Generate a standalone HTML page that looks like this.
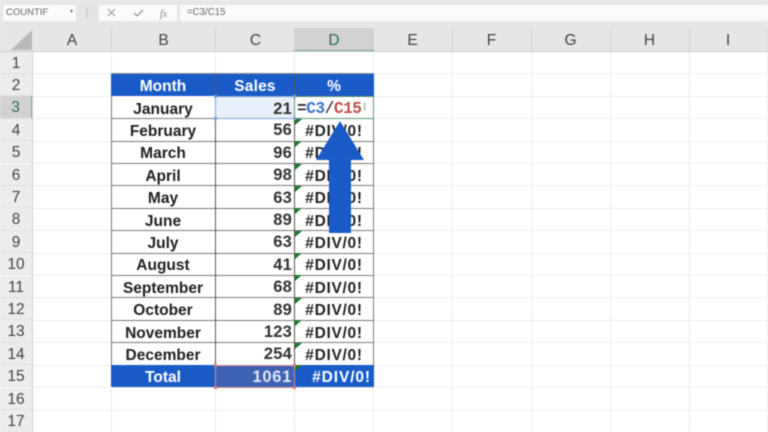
<!DOCTYPE html>
<html><head><meta charset="utf-8"><style>
html,body{margin:0;padding:0;background:#fff}
#p{position:relative;width:768px;height:432px;overflow:hidden;background:#fff;font-family:"Liberation Sans",sans-serif;filter:blur(.45px)}
#p div{position:absolute;box-sizing:border-box;white-space:nowrap}
.gv{top:52px;width:1px;height:380px;background:#ececec}
.gh{left:33px;width:735px;height:1px;background:#ececec}
.ch{top:28px;height:24px;line-height:25px;text-align:center;font-size:15.5px;color:#444}
.cs{top:28px;width:1px;height:23px;background:#d4d4d4}
.rn{left:0;width:32px;height:22.4px;line-height:23px;text-align:center;font-size:15.5px;color:#444;background:#ececec;border-bottom:1px solid #e2e2e2}
.k{height:1px;background:#7a7a7a;left:111px;width:263px}
.v{width:1px;background:#7a7a7a;top:96px;height:269px}
.m{left:111px;width:104px;height:22.4px;line-height:25.5px;text-align:center;font-size:15.5px;font-weight:bold;color:#222}
.n{left:216px;width:76px;height:22.4px;line-height:24px;text-align:right;font-size:16.5px;letter-spacing:.2px;font-weight:bold;color:#333}
.e{left:295px;width:78px;height:22.4px;line-height:25px;text-align:center;font-size:15.5px;letter-spacing:.7px;font-weight:bold;color:#222}
.w{color:#fff}
</style></head><body><div id="p">
<div style="left:0;top:0;width:768px;height:52px;background:#e6e6e6"></div>
<div style="left:3px;top:5px;width:73px;height:16px;background:#fbfbfb;font-size:9.5px;line-height:16px;color:#666;padding-left:3px">COUNTIF<span style="position:absolute;left:67px;top:-1px;font-size:6px">▾</span></div>
<div style="left:86px;top:8px;width:2px;height:9px;border-left:2px dotted #c2c2c2"></div>
<div style="left:99px;top:5px;width:78px;height:16px;background:#fbfbfb"></div>
<svg style="position:absolute;left:99px;top:5px" width="78" height="16"><path d="M9 4l7 7M16 4l-7 7" stroke="#999" stroke-width="1.1" fill="none"/><path d="M35 8l3 3 6-6" stroke="#999" stroke-width="1.3" fill="none"/><text x="61" y="12" font-size="10" font-style="italic" font-family="Liberation Serif" fill="#888">fx</text></svg>
<div style="left:180px;top:5px;width:588px;height:16px;background:#fbfbfb;font-size:9.7px;line-height:16px;color:#666;padding-left:7px">=C3/C15</div>

<svg style="position:absolute;left:0;top:28px" width="33" height="24"><path d="M32 2V22H11Z" fill="#b9b9b9"/></svg>
<div style="left:294.500px;top:28px;width:79px;height:24px;background:#d2d2d2;border-bottom:2px solid #7ba88f"></div>
<div class="ch" style="left:33px;width:78px">A</div><div class="ch" style="left:111px;width:105px">B</div><div class="ch" style="left:216px;width:79px">C</div><div class="ch" style="left:295px;width:78px;color:#2f6b4a">D</div><div class="ch" style="left:373px;width:79px">E</div><div class="ch" style="left:452px;width:79px">F</div><div class="ch" style="left:531px;width:79px">G</div><div class="ch" style="left:610px;width:79px">H</div><div class="ch" style="left:689px;width:78px">I</div>
<div class="cs" style="left:111px"></div><div class="cs" style="left:215px"></div><div class="cs" style="left:294px"></div><div class="cs" style="left:452px"></div><div class="cs" style="left:531px"></div><div class="cs" style="left:610px"></div><div class="cs" style="left:689px"></div><div class="cs" style="left:767px"></div>
<div style="left:0;top:51px;width:768px;height:1px;background:#cdcdcd"></div>

<div class="rn" style="top:51.5px">1</div><div class="rn" style="top:73.9px">2</div><div class="rn" style="top:96.3px;background:#d2d2d2;width:33px;border-right:2px solid #7ba88f;color:#2f6b4a">3</div><div class="rn" style="top:118.7px">4</div><div class="rn" style="top:141.1px">5</div><div class="rn" style="top:163.5px">6</div><div class="rn" style="top:185.9px">7</div><div class="rn" style="top:208.3px">8</div><div class="rn" style="top:230.7px">9</div><div class="rn" style="top:253.1px">10</div><div class="rn" style="top:275.5px">11</div><div class="rn" style="top:297.9px">12</div><div class="rn" style="top:320.3px">13</div><div class="rn" style="top:342.7px">14</div><div class="rn" style="top:365.1px">15</div><div class="rn" style="top:387.5px">16</div><div class="rn" style="top:409.9px">17</div>
<div style="left:32px;top:52px;width:1px;height:380px;background:#d4d4d4"></div>

<div class="gv" style="left:111px"></div><div class="gv" style="left:215px"></div><div class="gv" style="left:294px"></div><div class="gv" style="left:373px"></div><div class="gv" style="left:452px"></div><div class="gv" style="left:531px"></div><div class="gv" style="left:610px"></div><div class="gv" style="left:689px"></div><div class="gv" style="left:767px"></div>
<div class="gh" style="top:73px"></div><div class="gh" style="top:96px"></div><div class="gh" style="top:118px"></div><div class="gh" style="top:141px"></div><div class="gh" style="top:163px"></div><div class="gh" style="top:185px"></div><div class="gh" style="top:208px"></div><div class="gh" style="top:230px"></div><div class="gh" style="top:253px"></div><div class="gh" style="top:275px"></div><div class="gh" style="top:297px"></div><div class="gh" style="top:320px"></div><div class="gh" style="top:342px"></div><div class="gh" style="top:365px"></div><div class="gh" style="top:387px"></div><div class="gh" style="top:410px"></div>

<div style="left:111px;top:74px;width:263px;height:22px;background:#1a5bc8"></div>
<div style="left:111px;top:96px;width:263px;height:269px;background:#fff"></div>
<div style="left:111px;top:365px;width:263px;height:22px;background:#1a5bc8"></div>
<div style="left:216px;top:96px;width:79px;height:23px;background:#e8f0fa"></div>

<div class="k" style="top:118px"></div><div class="k" style="top:141px"></div><div class="k" style="top:163px"></div><div class="k" style="top:185px"></div><div class="k" style="top:208px"></div><div class="k" style="top:230px"></div><div class="k" style="top:253px"></div><div class="k" style="top:275px"></div><div class="k" style="top:297px"></div><div class="k" style="top:320px"></div><div class="k" style="top:342px"></div>
<div class="k" style="top:73px;background:#888"></div>
<div class="v" style="left:111px"></div><div class="v" style="left:215px;top:74px;height:291px;background:#555"></div><div class="v" style="left:294px;top:74px;height:291px;background:#555"></div><div class="v" style="left:373px"></div>

<div style="left:215px;top:96px;width:80px;height:23px;border:1px solid #7fa3e0"></div>
<div style="left:294px;top:96px;width:80px;height:23px;border:1px solid #5d9577;background:#fff"></div>
<div style="left:215px;top:365px;width:80px;height:23px;background:#3f62b5;border:1px solid #d88a80"></div>

<div class="m w" style="top:74px">Month</div><div class="n w" style="top:74.500px;left:215px;width:80px;text-align:center;font-size:15.5px">Sales</div><div class="e w" style="top:74px;letter-spacing:0">%</div>
<div class="m" style="top:96.500px">January</div><div class="n" style="top:96.500px">21</div>
<div style="left:297px;top:96.500px;height:22px;line-height:24px;font-size:16.200px;font-weight:bold;font-family:'Liberation Mono',monospace;letter-spacing:-.5px;color:#333">=<span style="color:#3f72cf">C3</span><span style="color:#444">/</span><span style="color:#bd5048">C15</span></div>
<div style="left:363px;top:101px;font-size:10px;line-height:14px;font-family:'Liberation Serif',serif;color:#888">I</div>

<div class="m" style="top:118.900px">February</div><div class="n" style="top:118.400px">56</div>
<div class="m" style="top:141.300px">March</div><div class="n" style="top:140.800px">96</div>
<div class="m" style="top:163.700px">April</div><div class="n" style="top:163.200px">98</div>
<div class="m" style="top:186.100px">May</div><div class="n" style="top:185.600px">63</div>
<div class="m" style="top:208.500px">June</div><div class="n" style="top:208.000px">89</div>
<div class="m" style="top:230.900px">July</div><div class="n" style="top:230.400px">63</div>
<div class="m" style="top:253.300px">August</div><div class="n" style="top:252.800px">41</div>
<div class="m" style="top:275.700px">September</div><div class="n" style="top:275.200px">68</div>
<div class="m" style="top:298.100px">October</div><div class="n" style="top:297.600px">89</div>
<div class="m" style="top:320.500px">November</div><div class="n" style="top:320.000px">123</div>
<div class="m" style="top:342.900px">December</div><div class="n" style="top:342.400px">254</div>
<div class="m w" style="top:365.300px">Total</div><div class="n" style="top:365.300px;color:#dfe6f5;letter-spacing:.7px">1061</div>
<div class="e" style="top:118.900px">#DIV/0!</div><div class="e" style="top:141.300px">#DIV/0!</div><div class="e" style="top:163.700px">#DIV/0!</div><div class="e" style="top:186.100px">#DIV/0!</div><div class="e" style="top:208.500px">#DIV/0!</div><div class="e" style="top:230.900px">#DIV/0!</div><div class="e" style="top:253.300px">#DIV/0!</div><div class="e" style="top:275.700px">#DIV/0!</div><div class="e" style="top:298.100px">#DIV/0!</div><div class="e" style="top:320.500px">#DIV/0!</div><div class="e" style="top:342.900px">#DIV/0!</div>
<div class="e w" style="top:365.300px;left:295px;width:76px;text-align:right;letter-spacing:.9px">#DIV/0!</div>

<svg style="position:absolute;left:0;top:0" width="768" height="432">
<g fill="#1c7a2e"><path d="M295 119h7l-7 6z"/><path d="M295 141h7l-7 6z"/><path d="M295 164h7l-7 6z"/><path d="M295 186h7l-7 6z"/><path d="M295 208h7l-7 6z"/><path d="M295 231h7l-7 6z"/><path d="M295 253h7l-7 6z"/><path d="M295 275h7l-7 6z"/><path d="M295 298h7l-7 6z"/><path d="M295 320h7l-7 6z"/><path d="M295 343h7l-7 6z"/><path d="M295 365h7l-7 6z"/></g>
<path d="M340 121L364 160H351V233H329V160H316Z" fill="#1a5bc8"/>
<g fill="#7ea3e0"><rect x="214" y="95" width="3" height="3"/><rect x="293" y="95" width="3" height="3"/><rect x="214" y="117" width="3" height="3"/><rect x="293" y="117" width="3" height="3"/></g>
<g fill="#d27b70"><rect x="214" y="364" width="3" height="3"/><rect x="293" y="364" width="3" height="3"/><rect x="214" y="386" width="3" height="3"/><rect x="293" y="386" width="3" height="3"/></g>
</svg>
</div></body></html>
